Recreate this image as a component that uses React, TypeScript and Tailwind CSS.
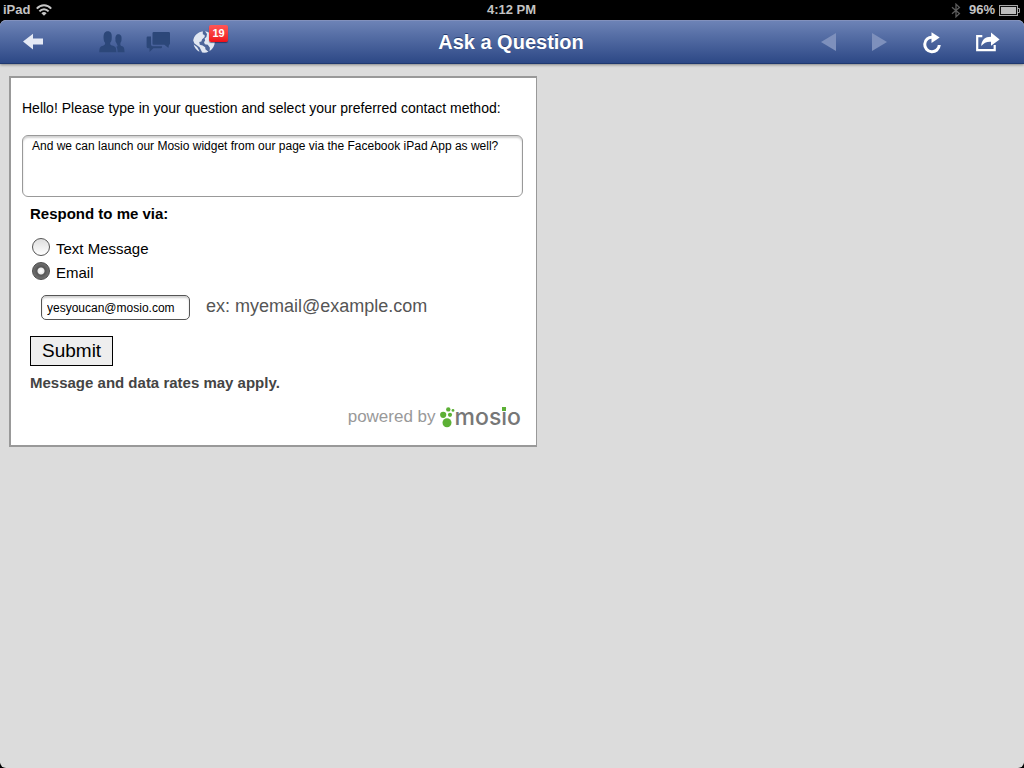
import { useState } from "react";

const MESSAGE = "And we can launch our Mosio widget from our page via the Facebook iPad App as well?";

function StatusBar() {
  return (
    <div className="grid h-5 grid-cols-[1fr_auto_1fr] items-center bg-black pr-1 pl-[3px] text-[13px] leading-5 font-bold text-[#c4c4c4]">
      <div className="flex items-center gap-1.5">
        <span>iPad</span>
        <svg width="16" height="12" viewBox="0 0 16 12" fill="none" stroke="#c8c8c8" strokeWidth="2" aria-hidden="true">
          <path d="M0.8 4.6C4.9 0.1 11.1 0.1 15.2 4.6" />
          <path d="M3.4 7.4C6 4.5 10 4.5 12.6 7.4" />
          <path d="M8 11.8L5.4 9.2C6.8 7.7 9.2 7.7 10.6 9.2Z" fill="#c8c8c8" stroke="none" />
        </svg>
      </div>
      <span>4:12 PM</span>
      <div className="flex items-center justify-end gap-1">
        <svg className="mr-1" width="10" height="15" viewBox="0 0 10 15" fill="none" stroke="#5c5c5c" strokeWidth="1.3" aria-hidden="true">
          <path d="M1 4.3L8.4 10.6L5 13.8V1.2L8.4 4.4L1 10.7" />
        </svg>
        <span>96%</span>
        <svg width="21" height="11" viewBox="0 0 21 11" aria-hidden="true">
          <rect x="0.5" y="0.5" width="18" height="10" fill="#111" stroke="#a8a8a8" />
          <rect x="2" y="2" width="15" height="7" fill="#bdbdbd" />
          <path d="M19 3.5H20.5V7.5H19" fill="none" stroke="#a8a8a8" />
        </svg>
      </div>
    </div>
  );
}

function NavBar() {
  return (
    <header className="grid h-11 grid-cols-[1fr_auto_1fr] items-center rounded-t-md border-t border-b border-t-[#8291bd] border-b-[#1f386f] bg-linear-to-b from-[#6d83b6] to-[#2d4886] pr-6 pl-[22px] shadow-[0_1px_3px_rgba(0,0,0,0.4)]">
      <div className="flex items-center">
        <button type="button" aria-label="Back" className="mr-[55px]">
          <svg width="22" height="18" viewBox="0 0 22 18" aria-hidden="true">
            <path d="M1 8.6L11 0.7V5.6H21V11.6H11V16.5Z" fill="#e5eaf5" />
          </svg>
        </button>
        <button type="button" aria-label="Friend requests" className="mr-[21px]">
          <svg width="26" height="22" viewBox="0 0 26 22" fill="#2c4779" aria-hidden="true">
            <path d="M18.6 15.2C19 14.6 18 13.4 17.4 12C16.4 10.8 16.3 9.6 16.5 8.8C16 5 17.4 3.2 19.4 3.2C21.9 3.2 23 5.4 22.5 8.8C22.6 10 22.2 10.8 21.6 11.6C21.1 13.7 21.3 14.6 22.3 15.1C24.8 15.8 25.4 16.4 25.5 21.2H18.6C18.5 18.5 18.3 17 17.4 15.8Z" />
            <path d="M0.3 21.2C0.4 16.2 1 15.6 4.6 14.5C6.4 13.9 6.2 12.7 6 11.6C4.8 10.1 4.8 9 4.6 7.4C4.3 2.6 5.8 0.3 8.8 0.3C11.8 0.3 13.2 2.7 12.7 7.4C12.7 9 12.4 10.1 11.3 11.6C11 13 11 13.9 12.9 14.6C16.6 15.6 17.2 16.3 17.4 21.2Z" />
          </svg>
        </button>
        <button type="button" aria-label="Messages" className="mr-[21px]">
          <svg width="25" height="22" viewBox="0 0 25 22" fill="#2c4779" aria-hidden="true">
            <path d="M1.8 5.5H5V13.5Q5 15.2 6.7 15.2H16V16Q16 17.2 14.8 17.2H7.4L3.5 21V17.2H2Q0.6 17.2 0.6 15.8V6.8Q0.6 5.5 1.8 5.5Z" />
            <path d="M7.8 1H22.8Q24 1 24 2.2V12.6Q24 13.8 23 13.8L22.4 17L18.4 13.8H7.8Q6.5 13.8 6.5 12.5V2.3Q6.5 1 7.8 1Z" />
          </svg>
        </button>
        <button type="button" aria-label="Notifications" className="relative">
          <svg width="24" height="24" viewBox="0 0 24 24" aria-hidden="true">
            <circle cx="12" cy="12" r="10.8" fill="#4c659a" />
            <path d="M10.8 1.2C6 2 2 5.4 1.2 10.4L2.4 13.6L5.2 15.6L7.6 17.2L9.2 20.4L10.2 22.6C12.5 22.9 14.6 22.6 16.4 21.8L13.4 19.2L13.2 17.2L10.6 15.4L7.8 14.7L7.3 12.1L9.4 11.5L10 9.4L12.7 7.1L12.6 5L10.8 4.3Z" fill="#e1e7f2" />
            <path d="M13 1.2L15 4.1L14.4 6.9L12.6 8.5L13.1 10.6L12 12.3L12.9 14.3L15.8 14.7L17.9 17.7L17.6 20.9C20.9 18.8 22.8 15.6 22.8 12C22.8 6.5 18.7 2 13 1.2Z" fill="#e1e7f2" />
            <path d="M1.6 14.6L5 17L6.8 20L7.4 21.8C4.6 20.4 2.4 17.8 1.6 14.6Z" fill="#e1e7f2" />
          </svg>
          <span className="absolute -top-[5px] left-[17px] h-[17px] w-[19px] rounded-xs bg-linear-to-b from-[#ff5555] to-[#f00b17] text-center text-[11px] leading-[17px] font-bold text-white shadow-[0_1px_1px_rgba(20,30,70,0.6)]">
            19
          </span>
        </button>
      </div>
      <h1 className="text-xl leading-6 font-bold text-white [text-shadow:0_-1px_0_#263d70]">Ask a Question</h1>
      <div className="flex items-center justify-end">
        <button type="button" aria-label="Previous page" className="mr-9">
          <svg width="15" height="18" viewBox="0 0 15 18" aria-hidden="true">
            <path d="M0 9L15 0V18Z" fill="#7e90bc" />
          </svg>
        </button>
        <button type="button" aria-label="Next page" className="mr-[35px]">
          <svg width="15" height="18" viewBox="0 0 15 18" aria-hidden="true">
            <path d="M15 9L0 0V18Z" fill="#7e90bc" />
          </svg>
        </button>
        <button type="button" aria-label="Reload" className="mr-[34px] pt-0.5">
          <svg width="20" height="22" viewBox="0 0 20 22" aria-hidden="true">
            <path d="M10.5 5.2A7.3 7.3 0 1 0 17.3 13" fill="none" stroke="#fff" strokeWidth="3" />
            <path d="M9.5 0.2L17.7 5.4L9.5 11Z" fill="#fff" />
          </svg>
        </button>
        <button type="button" aria-label="Share">
          <svg width="24" height="20" viewBox="0 0 24 20" aria-hidden="true">
            <path d="M6.3 4.2H1.2V18.2H18.7V13" fill="none" stroke="#fff" strokeWidth="2.2" />
            <path d="M15 0.6L23.6 7.4L15 13.8V9.8C10.5 9.5 8 11 5.2 14C5.6 7.8 9 4.7 15 4.7Z" fill="#fff" />
          </svg>
        </button>
      </div>
    </header>
  );
}

const radioClass =
  "size-[18px] appearance-none rounded-full border border-[#555] bg-linear-to-b from-[#dedede] to-white checked:border-[#4a4a4a] checked:bg-[radial-gradient(circle,#fff_0px,#e8e8e8_3px,#555_4px,#777_9px)]";

export default function App() {
  const [message, setMessage] = useState(MESSAGE);
  const [method, setMethod] = useState("email");
  const [email, setEmail] = useState("yesyoucan@mosio.com");

  return (
    <div className="min-h-screen bg-black font-['Liberation_Sans',Arial,sans-serif]">
      <div className="flex min-h-screen flex-col">
        <StatusBar />
        <div className="flex flex-1 flex-col rounded-md bg-[#dcdcdc]">
          <NavBar />
          <main className="px-[9px] pt-3 pb-3">
            <form
              onSubmit={(e) => e.preventDefault()}
              className="w-[528px] max-w-full border-2 border-r border-[#999] bg-white pt-5 pr-[13px] pb-4 pl-[11px] text-[15px] leading-5 text-black"
            >
              <label htmlFor="question" className="block text-sm leading-5">
                Hello! Please type in your question and select your preferred contact method:
              </label>
              <textarea
                id="question"
                value={message}
                onChange={(e) => setMessage(e.target.value)}
                className="mt-[17px] block h-[62px] w-full resize-none rounded-md border border-[#999] bg-white px-[9px] pt-0.5 text-xs leading-4 shadow-[inset_0_2px_2px_rgba(0,0,0,0.18)]"
              />
              <fieldset className="mt-[7px] pl-2">
                <legend className="font-bold">Respond to me via:</legend>
                <div className="mt-[11px] pl-0.5">
                  <div className="flex h-6 items-center gap-1.5">
                    <input id="text" type="radio" name="method" checked={method === "text"} onChange={() => setMethod("text")} className={radioClass} />
                    <label htmlFor="text" className="pt-1">Text Message</label>
                  </div>
                  <div className="flex h-6 items-center gap-1.5">
                    <input id="email" type="radio" name="method" checked={method === "email"} onChange={() => setMethod("email")} className={radioClass} />
                    <label htmlFor="email" className="pt-1">Email</label>
                  </div>
                </div>
              </fieldset>
              <div className="mt-[11px] flex items-center gap-4 pl-[19px]">
                <input
                  id="address"
                  type="email"
                  value={email}
                  onChange={(e) => setEmail(e.target.value)}
                  className="h-[25px] w-[149px] rounded-[5px] border border-[#555] bg-white px-[5px] pt-0.5 text-xs shadow-[inset_0_2px_2px_rgba(0,0,0,0.18)]"
                />
                <label htmlFor="address" className="pb-0.5 text-lg leading-6 text-[#555]">
                  ex: myemail@example.com
                </label>
              </div>
              <div className="pl-2">
                <button type="submit" className="mt-4 h-[30px] border border-black bg-[#eee] px-[11px] text-[19px] leading-7">
                  Submit
                </button>
                <p className="mt-[7px] font-bold text-[#444]">Message and data rates may apply.</p>
              </div>
              <div className="mt-3 flex h-6 items-center justify-end pr-0.5">
                <span className="mr-1 text-[17px] leading-6 text-[#999]">powered by</span>
                <svg width="15" height="22" viewBox="0 0 15 22" fill="#5cb035" aria-hidden="true">
                  <circle cx="3.2" cy="8.8" r="3.1" />
                  <circle cx="8.3" cy="3.4" r="2.2" />
                  <circle cx="13" cy="4.4" r="1.4" />
                  <circle cx="10" cy="8.8" r="2.1" />
                  <circle cx="7" cy="16.7" r="4.5" />
                </svg>
                <span className="font-['Inter',sans-serif] text-[23px] leading-6 font-medium text-[#777]">
                  mos
                  <span className="relative">
                    i<span className="absolute top-[4px] left-[1px] size-1 bg-[#5cb035]" />
                  </span>
                  o
                </span>
              </div>
            </form>
          </main>
        </div>
      </div>
    </div>
  );
}
